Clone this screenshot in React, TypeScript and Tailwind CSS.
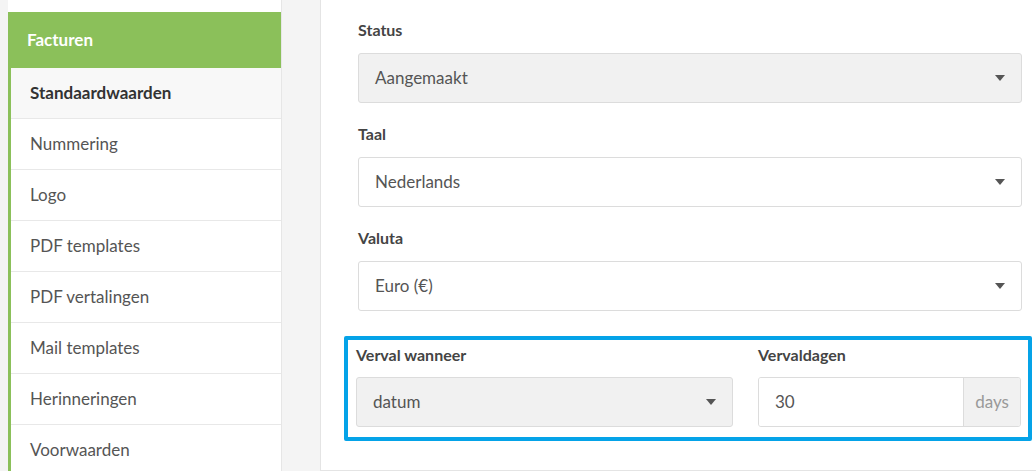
import React from 'react';

const menu = [
  'Standaardwaarden',
  'Nummering',
  'Logo',
  'PDF templates',
  'PDF vertalingen',
  'Mail templates',
  'Herinneringen',
  'Voorwaarden',
];

function Caret() {
  return (
    <svg width="10" height="6" viewBox="0 0 10 6" className="shrink-0">
      <path d="M0 0 L10 0 L5 6 Z" fill="#555" />
    </svg>
  );
}

function Select({ value, gray }: { value: string; gray?: boolean }) {
  return (
    <div
      className={`flex h-[50px] items-center justify-between rounded-[3px] border border-[#dcdcdc] pl-[16px] pr-[16px] text-[17px] text-[#555] ${
        gray ? 'bg-[#f1f1f1]' : 'bg-white'
      }`}
    >
      <span>{value}</span>
      <Caret />
    </div>
  );
}

function Field({ label, value, gray }: { label: string; value: string; gray?: boolean }) {
  return (
    <div className="mb-[20px]">
      <div className="mb-[12px] h-[22px] text-[16px] font-bold leading-[22px] text-[#444]">{label}</div>
      <Select value={value} gray={gray} />
    </div>
  );
}

export default function App() {
  return (
    <div
      className="flex h-[471px] w-[1036px] overflow-hidden bg-[#f4f4f4]"
      style={{ fontFamily: 'Lato, "Open Sans", sans-serif' }}
    >
      <aside className="ml-[8px] w-[274px] shrink-0 border-r border-[#e6e6e6] bg-white">
        <div className="h-[12px]" />
        <div className="flex h-[56px] items-center bg-[#8bc05a] pl-[19px] text-[17px] font-bold text-white">
          Facturen
        </div>
        <ul className="border-l-[3px] border-[#8bc05a]">
          {menu.map((item, i) => (
            <li
              key={item}
              className={`flex h-[51px] items-center border-b border-[#e8e8e8] pl-[19px] text-[17px] ${
                i === 0 ? 'bg-[#f8f8f8] font-bold text-[#333]' : 'text-[#555]'
              }`}
            >
              {item}
            </li>
          ))}
        </ul>
      </aside>

      <div className="w-[38px] shrink-0" />

      <main className="h-[471px] flex-1 border-b border-l border-[#e4e4e4] bg-white pl-[37px] pr-[14px] pt-[19px]">
        <Field label="Status" value="Aangemaakt" gray />
        <Field label="Taal" value="Nederlands" />
        <Field label="Valuta" value="Euro (€)" />

        {/* highlighted row */}
        <div className="-ml-[14px] -mr-[10px] mt-[25px] rounded-[2px] border-[4px] border-[#05a3e8] pb-[10px] pl-[8px] pr-[7px] pt-[4px]">
          <div className="flex gap-[25px]">
            <div className="w-[377px] shrink-0">
              <div className="mb-[11px] h-[22px] text-[16px] font-bold leading-[22px] text-[#444]">
                Verval wanneer
              </div>
              <Select value="datum" gray />
            </div>
            <div className="flex-1">
              <div className="mb-[11px] h-[22px] text-[16px] font-bold leading-[22px] text-[#444]">
                Vervaldagen
              </div>
              <div className="flex h-[50px] overflow-hidden rounded-[3px] border border-[#dcdcdc] text-[17px]">
                <div className="flex flex-1 items-center bg-white pl-[16px] text-[#555]">30</div>
                <div className="flex w-[57px] items-center justify-center border-l border-[#dcdcdc] bg-[#f1f1f1] text-[#999]">
                  days
                </div>
              </div>
            </div>
          </div>
        </div>
      </main>
    </div>
  );
}
